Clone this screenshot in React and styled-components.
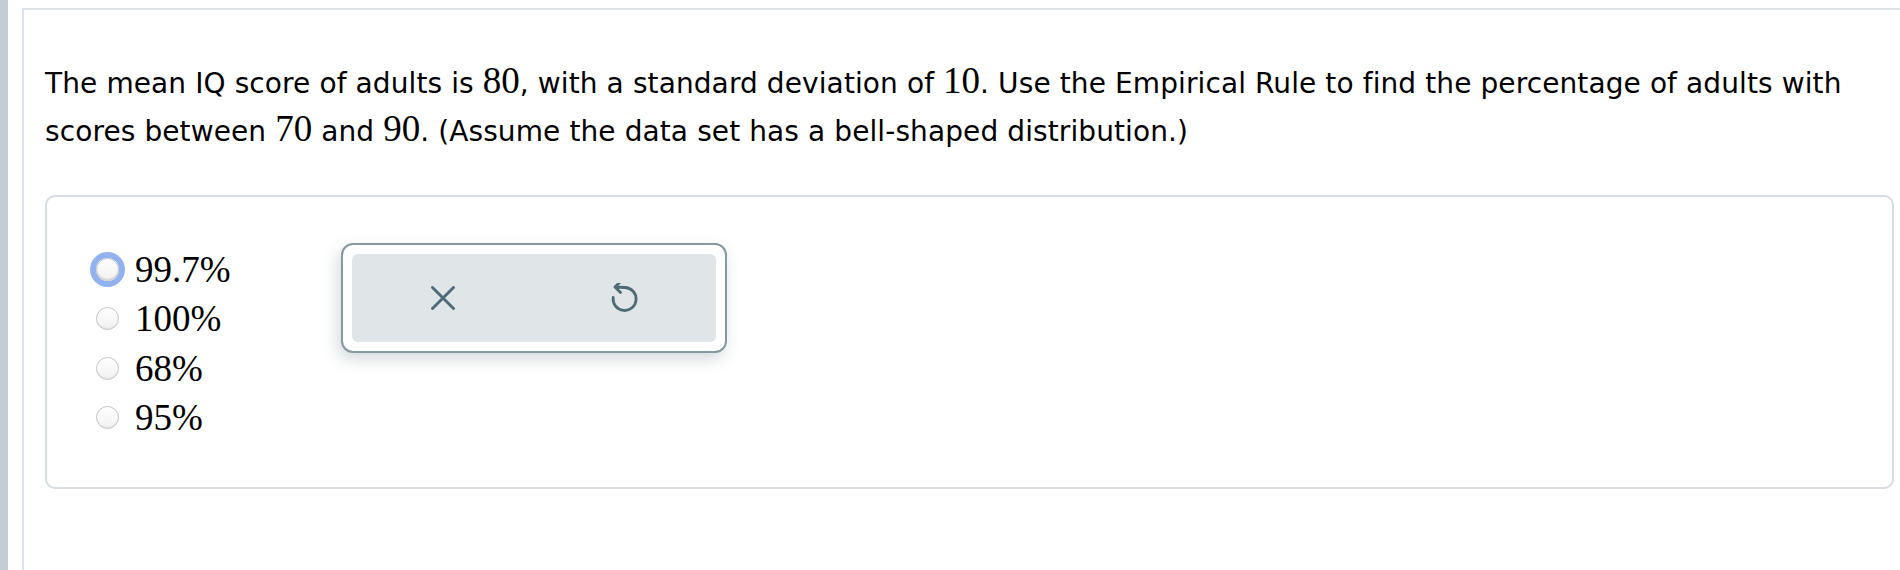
import React from "react";
import styled, { createGlobalStyle } from "styled-components";

const GlobalStyle = createGlobalStyle`
  html, body {
    margin: 0;
    padding: 0;
    background: #ffffff;
  }
  body {
    font-family: "DejaVu Sans", Verdana, sans-serif;
    overflow: hidden;
  }
`;

const Page = styled.div`
  display: flex;
  height: 570px;
  overflow: hidden;
`;

const SideBar = styled.div`
  width: 8px;
  flex-shrink: 0;
  background: #c3ced4;
`;

const Panel = styled.main`
  flex: 1;
  margin: 8px 0 0 14px;
  border-top: 2px solid #dde3e7;
  border-left: 2px solid #dde3e7;
  padding: 50px 6px 0 21px;
`;

const Question = styled.p`
  margin: 0;
  font-size: 28px;
  line-height: 48px;
  letter-spacing: 0.1px;
  color: #000;
`;

const MathNum = styled.span`
  font-family: "Liberation Serif", "Times New Roman", serif;
  font-size: 37px;
  line-height: 1;
  letter-spacing: 0;
`;

const AnswerBox = styled.section`
  box-sizing: border-box;
  margin-top: 39px;
  height: 294px;
  border: 2px solid #d6dce0;
  border-radius: 10px;
  display: flex;
  align-items: flex-start;
  padding: 46px 0 0 49px;
`;

const Options = styled.div`
  width: 245px;
  padding-top: 1.5px;
  display: flex;
  flex-direction: column;
`;

const OptionRow = styled.label`
  display: flex;
  align-items: center;
  gap: 16px;
  height: 49.5px;
  font-family: "Liberation Serif", "Times New Roman", serif;
  font-size: 37px;
  color: #000;
`;

const Radio = styled.span`
  width: 23px;
  height: 23px;
  flex-shrink: 0;
  box-sizing: border-box;
  border-radius: 50%;
  border: 1px solid #c4c4c4;
  background: linear-gradient(#ffffff, #f1f1f1);
  box-shadow: ${(p) =>
    p.focused
      ? "inset 0 -1px 1px rgba(0,0,0,0.12), 0 0 0 6px #91b2ef"
      : "inset 0 -1px 1px rgba(0,0,0,0.06)"};
`;

const ActionBox = styled.div`
  width: 386px;
  height: 110px;
  box-sizing: border-box;
  border: 2px solid #84989f;
  border-radius: 12px;
  background: #ffffff;
  padding: 9px;
  box-shadow: -3px 6px 16px rgba(40, 60, 70, 0.2);
`;

const ActionInner = styled.div`
  height: 100%;
  display: flex;
  background: #e0e5e8;
  border-radius: 6px;
`;

const ActionButton = styled.button`
  flex: 1;
  border: none;
  background: transparent;
  display: flex;
  align-items: center;
  justify-content: center;
  padding: 0;
  cursor: pointer;
  color: #4d6b76;
`;

function CloseIcon() {
  return (
    <svg width="24" height="24" viewBox="0 0 24 24" fill="none">
      <path
        d="M1.5 1.5 L22.5 22.5 M22.5 1.5 L1.5 22.5"
        stroke="currentColor"
        strokeWidth="2.9"
        strokeLinecap="round"
      />
    </svg>
  );
}

function UndoIcon() {
  return (
    <svg width="30" height="30" viewBox="16 17 30 30" fill="none">
      <path
        d="M31 21.5 A11.5 11.5 0 1 1 19.2 31.5"
        stroke="currentColor"
        strokeWidth="2.8"
        strokeLinecap="round"
      />
      <path
        d="M31 21.5 L21 21 M26.5 15.5 L21 21 L26.5 26.5"
        stroke="currentColor"
        strokeWidth="2.8"
        strokeLinecap="round"
        strokeLinejoin="round"
      />
    </svg>
  );
}

const options = [
  { label: "99.7%", focused: true },
  { label: "100%" },
  { label: "68%" },
  { label: "95%" },
];

export default function App() {
  return (
    <>
      <GlobalStyle />
      <Page>
        <SideBar />
        <Panel>
          <Question>
            The mean IQ score of adults is <MathNum>80</MathNum>, with a
            standard deviation of <MathNum>10</MathNum>. Use the Empirical Rule
            to find the percentage of adults with scores between{" "}
            <MathNum>70</MathNum> and <MathNum>90</MathNum>. (Assume the data
            set has a bell-shaped distribution.)
          </Question>
          <AnswerBox>
            <Options>
              {options.map((o) => (
                <OptionRow key={o.label}>
                  <Radio focused={o.focused} />
                  {o.label}
                </OptionRow>
              ))}
            </Options>
            <ActionBox>
              <ActionInner>
                <ActionButton aria-label="Clear">
                  <CloseIcon />
                </ActionButton>
                <ActionButton aria-label="Undo">
                  <UndoIcon />
                </ActionButton>
              </ActionInner>
            </ActionBox>
          </AnswerBox>
        </Panel>
      </Page>
    </>
  );
}
